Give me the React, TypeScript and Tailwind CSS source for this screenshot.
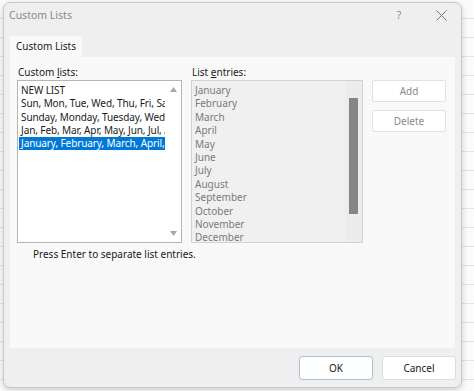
import React from 'react';

const customLists = [
  'NEW LIST',
  'Sun, Mon, Tue, Wed, Thu, Fri, Sat',
  'Sunday, Monday, Tuesday, Wednesday, Thursday, Friday, Saturday',
  'Jan, Feb, Mar, Apr, May, Jun, Jul, Aug, Sep, Oct, Nov, Dec',
  'January, February, March, April, May, June, July, August, September, October, November, December',
];

const months = [
  'January', 'February', 'March', 'April', 'May', 'June',
  'July', 'August', 'September', 'October', 'November', 'December',
];

const App: React.FC = () => {
  return (
    <div className="w-[474px] h-[391px] overflow-hidden bg-[#fbfbfb] bg-[repeating-linear-gradient(to_bottom,transparent_0px,transparent_18px,#e4e4e4_18px,#e4e4e4_19px)] pt-[2px] pl-[3px] font-['Noto_Sans','Open_Sans',sans-serif] text-[10px] text-[#1a1a1a]">
      <div className="w-[459px] h-[386px] bg-[#efefef] rounded-[7px] border border-[#c9c9c9] shadow-[0_2px_6px_rgba(0,0,0,0.18)] flex flex-col">
        {/* title bar */}
        <div className="h-[25px] flex items-center pl-[5px] pr-[14px] text-[#8a8a8a] text-[10.5px]">
          <span className="flex-1">Custom Lists</span>
          <span className="w-[14px] text-center text-[10.5px] mr-[30px]">?</span>
          <svg width="11" height="11" viewBox="0 0 11 11" className="text-[#777]">
            <path d="M0.5 0.5 L10.5 10.5 M10.5 0.5 L0.5 10.5" stroke="currentColor" strokeWidth="1" />
          </svg>
        </div>

        {/* tab */}
        <div className="pl-[6px] pt-[8px]">
          <div className="w-[72px] h-[21px] bg-[#f9f9f9] flex items-center justify-center">
            Custom Lists
          </div>
        </div>

        {/* panel */}
        <div className="mx-[6px] w-[445px] h-[291px] bg-[#f9f9f9] pl-[7px] pt-[8px]">
          <div className="flex gap-[9px]">
            <div className="flex flex-col">
              <div className="h-[14px] leading-[14px] pl-[1px]">
                Custom <span className="underline">l</span>ists:
              </div>
              <div className="mt-[1px] w-[165px] h-[163px] bg-white border border-[#b5b5b5] flex">
                <div className="flex-1 min-w-0 pt-[3px] pl-[1px] tracking-[-0.1px]">
                  {customLists.map((item, i) => (
                    <div
                      key={i}
                      className={`h-[13.3px] leading-[13.3px] whitespace-nowrap overflow-hidden pl-[2px] ${i === 4 ? 'bg-[#0078d7] text-white' : ''}`}
                    >
                      {item}
                    </div>
                  ))}
                </div>
                <div className="w-[16px] flex flex-col items-center justify-between py-[6px] text-[#a8a8a8]">
                  <svg width="7" height="5" viewBox="0 0 7 5"><path d="M0 5 L3.5 0 L7 5 Z" fill="currentColor" /></svg>
                  <svg width="7" height="5" viewBox="0 0 7 5"><path d="M0 0 L3.5 5 L7 0 Z" fill="currentColor" /></svg>
                </div>
              </div>
            </div>

            <div className="flex flex-col">
              <div className="h-[14px] leading-[14px] pl-[1px]">
                List <span className="underline">e</span>ntries:
              </div>
              <div className="mt-[1px] w-[172px] h-[163px] bg-[#f0f0f0] border border-[#d2d2d2] flex">
                <div className="flex-1 pt-[3px] pl-[3px] text-[#7b7b7b] overflow-hidden">
                  {months.map((m) => (
                    <div key={m} className="h-[13.4px] leading-[13.4px]">{m}</div>
                  ))}
                </div>
                <div className="w-[17px] bg-[#ececec] pt-[17px] flex justify-center">
                  <div className="w-[9px] h-[116px] bg-[#858585]" />
                </div>
              </div>
            </div>

            <div className="flex flex-col gap-[8px] pt-[15px]">
              <button className="w-[74px] h-[22px] bg-white border border-[#e2e2e2] rounded-[2px] text-[#8a8a8a] text-[10px]">
                Add
              </button>
              <button className="w-[74px] h-[22px] bg-white border border-[#e2e2e2] rounded-[2px] text-[#8a8a8a] text-[10px]">
                Delete
              </button>
            </div>
          </div>

          <div className="mt-[4px] pl-[16px] h-[14px] leading-[14px]">
            Press Enter to separate list entries.
          </div>
        </div>

        {/* footer */}
        <div className="flex justify-end gap-[9px] pr-[5px] pt-[8px]">
          <button className="w-[74px] h-[24px] bg-white border border-[#a9c3d8] rounded-[3px] text-[10px]">
            OK
          </button>
          <button className="w-[74px] h-[24px] bg-white border border-[#dcdcdc] rounded-[3px] text-[10px]">
            Cancel
          </button>
        </div>
      </div>
    </div>
  );
};

export default App;
